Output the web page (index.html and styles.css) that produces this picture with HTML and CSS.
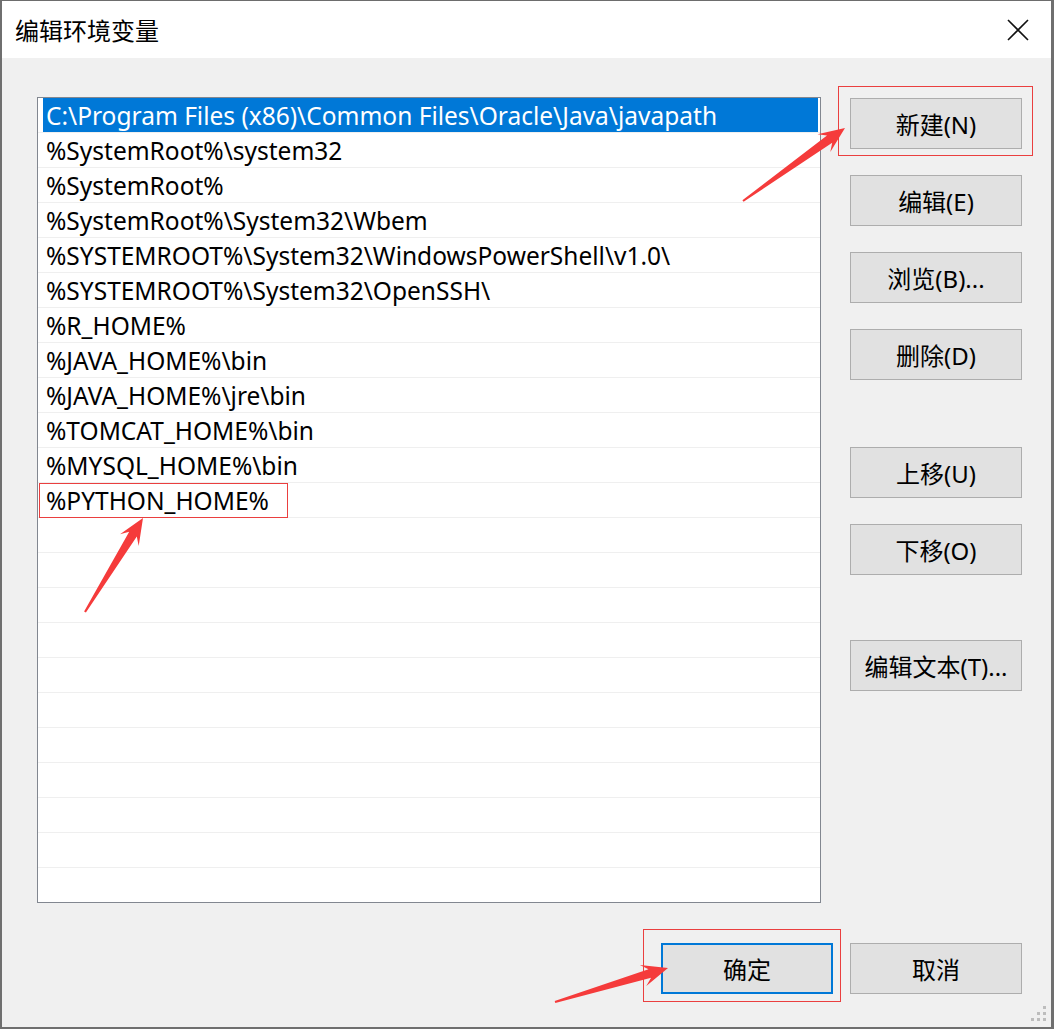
FILE: index.html
```html
<!DOCTYPE html>
<html lang="zh-CN">
<head>
    <meta charset="utf-8">
    <title>编辑环境变量</title>
    <link rel="stylesheet" href="styles.css">
</head>
<body>
    <div class="window">
        <div class="titlebar">
            <span class="title">编辑环境变量</span>
            <span class="close">
                <svg width="22" height="22" viewBox="0 0 22 22"><path d="M1 1 L21 21 M21 1 L1 21" stroke="#111" stroke-width="1.6" fill="none"/></svg>
            </span>
        </div>

        <div class="content">
            <div class="main">
                <div class="pathlist">
                    <div class="row selected"><span class="path">C:\Program Files (x86)\Common Files\Oracle\Java\javapath</span></div>
                    <div class="row"><span class="path">%SystemRoot%\system32</span></div>
                    <div class="row"><span class="path">%SystemRoot%</span></div>
                    <div class="row"><span class="path">%SystemRoot%\System32\Wbem</span></div>
                    <div class="row"><span class="path">%SYSTEMROOT%\System32\WindowsPowerShell\v1.0\</span></div>
                    <div class="row"><span class="path">%SYSTEMROOT%\System32\OpenSSH\</span></div>
                    <div class="row"><span class="path">%R_HOME%</span></div>
                    <div class="row"><span class="path">%JAVA_HOME%\bin</span></div>
                    <div class="row"><span class="path">%JAVA_HOME%\jre\bin</span></div>
                    <div class="row"><span class="path">%TOMCAT_HOME%\bin</span></div>
                    <div class="row"><span class="path">%MYSQL_HOME%\bin</span></div>
                    <div class="row"><span class="path">%PYTHON_HOME%</span></div>
                    <div class="row"></div>
                    <div class="row"></div>
                    <div class="row"></div>
                    <div class="row"></div>
                    <div class="row"></div>
                    <div class="row"></div>
                    <div class="row"></div>
                    <div class="row"></div>
                    <div class="row"></div>
                    <div class="row"></div>
                    <div class="row"></div>
                    <div class="row"></div>
                </div>

                <div class="side">
                    <div class="group">
                        <button class="btn">新建(N)</button>
                        <button class="btn">编辑(E)</button>
                        <button class="btn">浏览(B)...</button>
                        <button class="btn">删除(D)</button>
                    </div>
                    <div class="group">
                        <button class="btn">上移(U)</button>
                        <button class="btn">下移(O)</button>
                    </div>
                    <div class="group">
                        <button class="btn">编辑文本(T)...</button>
                    </div>
                </div>
            </div>

            <div class="footer">
                <button class="btn default">确定</button>
                <button class="btn">取消</button>
            </div>
        </div>

        <!-- resize grip -->
        <svg class="grip" width="18" height="18" viewBox="0 0 18 18">
            <rect x="13" y="0" width="3" height="3" fill="#bdbdbd"/>
            <rect x="7" y="6" width="3" height="3" fill="#bdbdbd"/>
            <rect x="13" y="6" width="3" height="3" fill="#bdbdbd"/>
            <rect x="1" y="12" width="3" height="3" fill="#bdbdbd"/>
            <rect x="7" y="12" width="3" height="3" fill="#bdbdbd"/>
            <rect x="13" y="12" width="3" height="3" fill="#bdbdbd"/>
        </svg>

        <!-- red annotations drawn on top of the screenshot -->
        <svg class="marks" width="1054" height="1029" viewBox="0 0 1054 1029">
            <rect x="838.5" y="86.5" width="194" height="69" fill="none" stroke="#ea3f3f" stroke-width="1"/>
            <rect x="39.5" y="483.5" width="248" height="34" fill="none" stroke="#ea3f3f" stroke-width="1"/>
            <rect x="643.5" y="929.5" width="197" height="72" fill="none" stroke="#ea3f3f" stroke-width="1"/>
            <polygon fill="#f53b3b" points="845,128 830.3,152 832.2,142.8 743.6,201.8 742.4,200.2 827,135.4 817.5,134.2"/>
            <polygon fill="#f53b3b" points="143,518 138.7,545.9 136.8,536.6 85.9,612.5 84.1,611.5 129.2,531.8 120,534.3"/>
            <polygon fill="#f53b3b" points="668,968 646.3,986 651.1,977.8 555.3,1003 554.7,1001 648.5,969.2 639.9,965"/>
        </svg>
    </div>
</body>
</html>
```

FILE: styles.css
```css
* {
    margin: 0;
    padding: 0;
    box-sizing: border-box;
}
body {
    width: 1054px;
    height: 1029px;
    overflow: hidden;
    font-family: "Noto Sans", "Noto Sans CJK SC", sans-serif;
    color: #000;
}
.window {
    position: relative;
    width: 1054px;
    height: 1029px;
    background: #f0f0f0;
    border-top: 1px solid #6d6d6d;
    border-left: 2px solid #6f6f6f;
    border-right: 3px solid #6f6f6f;
    border-bottom: 2px solid #6f6f6f;
}
.titlebar {
    height: 57px;
    background: #fff;
    display: flex;
    align-items: center;
    justify-content: space-between;
    padding-left: 13px;
    padding-right: 22px;
}
.title {
    font-size: 24px;
}
.close {
    display: flex;
}

.content {
    padding: 39px 29px 0 35px;
}
.main {
    display: flex;
}
.pathlist {
    width: 784px;
    height: 806px;
    background: #fff;
    border: 1px solid #828790;
    overflow: hidden;
}
.row {
    height: 35px;
    border-bottom: 1px solid #efefef;
    padding-left: 1px;
    font-size: 24.5px;
    line-height: 36px;
    white-space: nowrap;
    overflow: hidden;
}
.path {
    display: inline-block;
    height: 34px;
    padding-left: 7px;
}
.row.selected .path {
    display: block;
    background: #0078d7;
    color: #fff;
    margin: 0 2px 0 4px;
    padding-left: 3px;
}

.side {
    margin-left: 29px;
    padding-top: 1px;
    width: 172px;
}
.group {
    display: flex;
    flex-direction: column;
    gap: 26px;
    margin-bottom: 67px;
}
.group:nth-child(2) {
    margin-bottom: 65px;
}
.btn {
    width: 172px;
    height: 51px;
    background: #e1e1e1;
    border: 1px solid #adadad;
    font-family: "Noto Sans", "Noto Sans CJK SC", sans-serif;
    font-size: 24px;
    color: #000;
}
.btn.default {
    border: 2px solid #0078d7;
}

.footer {
    display: flex;
    justify-content: flex-end;
    gap: 17px;
    margin-top: 40px;
}

.grip {
    position: absolute;
    right: 3px;
    bottom: 3px;
}
.marks {
    position: absolute;
    left: -2px;
    top: -1px;
    pointer-events: none;
}
```
